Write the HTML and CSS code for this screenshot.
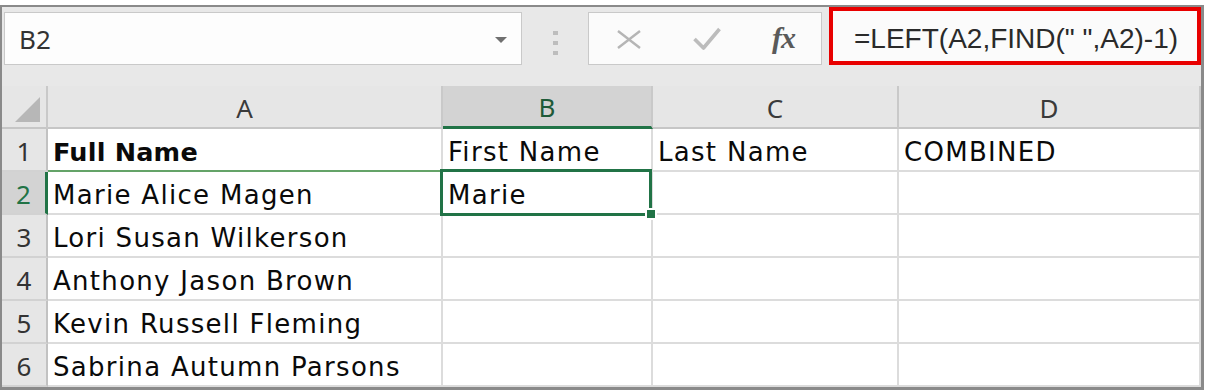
FILE: index.html
```html
<!DOCTYPE html>
<html>
<head>
<meta charset="utf-8">
<link rel="stylesheet" href="styles.css">
</head>
<body>
<div class="frame">
  <div class="toolbar">
    <div class="namebox">
      <span class="ref">B2</span>
      <span class="caret"></span>
    </div>
    <div class="grip"><i></i><i></i><i></i></div>
    <div class="fxbox">
      <svg class="icon-x" width="24" height="19" viewBox="0 0 24 19"><path d="M1 1 L23 18 M23 1 L1 18" stroke="#b5b5b5" stroke-width="2.4" fill="none"/></svg>
      <svg class="icon-check" width="28" height="24" viewBox="0 0 28 24"><path d="M1.5 12 L10.5 21 L26.5 2" stroke="#bcbcbc" stroke-width="3.6" fill="none" stroke-linejoin="round"/></svg>
      <span class="fx">fx</span>
    </div>
    <div class="formula">=LEFT(A2,FIND(" ",A2)-1)</div>
  </div>
  <div class="sheet">
    <div class="corner"><svg width="25" height="25" viewBox="0 0 25 25"><polygon points="25,0 25,25 0,25" fill="#b7b7b7"/></svg></div>
    <div class="colhead">A</div>
    <div class="colhead sel-col">B</div>
    <div class="colhead">C</div>
    <div class="colhead">D</div>

    <div class="rowhead">1</div>
    <div class="cell bold a1">Full Name</div>
    <div class="cell">First Name</div>
    <div class="cell">Last Name</div>
    <div class="cell">COMBINED</div>

    <div class="rowhead sel-row">2</div>
    <div class="cell">Marie Alice Magen</div>
    <div class="cell active">Marie<span class="selection"></span><span class="handle"></span></div>
    <div class="cell"></div>
    <div class="cell"></div>

    <div class="rowhead">3</div>
    <div class="cell">Lori Susan Wilkerson</div>
    <div class="cell"></div>
    <div class="cell"></div>
    <div class="cell"></div>

    <div class="rowhead">4</div>
    <div class="cell">Anthony Jason Brown</div>
    <div class="cell"></div>
    <div class="cell"></div>
    <div class="cell"></div>

    <div class="rowhead">5</div>
    <div class="cell">Kevin Russell Fleming</div>
    <div class="cell"></div>
    <div class="cell"></div>
    <div class="cell"></div>

    <div class="rowhead">6</div>
    <div class="cell">Sabrina Autumn Parsons</div>
    <div class="cell"></div>
    <div class="cell"></div>
    <div class="cell"></div>
  </div>
</div>
</body>
</html>
```

FILE: styles.css
```css
* { box-sizing: border-box; }

html, body {
  margin: 0;
  padding: 0;
  background: #ffffff;
}

.frame {
  margin-top: 5px;
  width: 1204px;
  border: 2px solid #8a8a8a;
  border-right-width: 3px;
  border-bottom-width: 3px;
  background: #e8e8e8;
}

/* ---------- formula bar ---------- */
.toolbar {
  height: 79px;
  display: flex;
  align-items: flex-start;
  background: #e8e8e8;
}

.namebox {
  margin-left: 2px;
  margin-top: 5px;
  width: 518px;
  height: 53px;
  background: #fdfdfd;
  border: 1px solid #c9c9c9;
  display: flex;
  align-items: center;
  justify-content: space-between;
  padding: 0 14px 0 14px;
}

.ref {
  font-family: "Noto Sans", sans-serif;
  font-size: 26px;
  color: #333333;
}

.caret {
  width: 0;
  height: 0;
  border-left: 6.5px solid transparent;
  border-right: 6.5px solid transparent;
  border-top: 6px solid #707070;
  margin-top: 2px;
}

.grip {
  margin-left: 31px;
  margin-top: 24px;
  width: 5px;
  display: flex;
  flex-direction: column;
  gap: 6px;
}

.grip i {
  display: block;
  width: 5px;
  height: 4px;
  background: #bdbdbd;
}

.fxbox {
  margin-left: 30px;
  margin-top: 5px;
  width: 234px;
  height: 53px;
  background: #fbfbfb;
  border: 1px solid #c9c9c9;
  display: flex;
  align-items: center;
  padding-left: 28px;
}

.icon-x { margin-top: 2px; }
.icon-check { margin-left: 52px; margin-top: 1px; }

.fx {
  margin-left: 51px;
  font-family: "Liberation Serif", serif;
  font-style: italic;
  font-weight: bold;
  font-size: 30px;
  color: #5a5a5a;
  letter-spacing: -1px;
  margin-top: -2px;
}

.formula {
  margin-left: 7px;
  flex: 1;
  height: 58px;
  border: 4px solid #e80000;
  background: #fbfbfb;
  display: flex;
  align-items: center;
  padding-left: 21px;
  padding-top: 5px;
  font-family: "Liberation Sans", Arial, sans-serif;
  font-size: 28px;
  color: #2a2a2a;
  white-space: nowrap;
}

/* ---------- sheet grid ---------- */
.sheet {
  display: grid;
  grid-template-columns: 46px 395px 210px 246px 1fr;
  grid-auto-rows: 43px;
  background: #ffffff;
}

.corner,
.colhead,
.rowhead {
  background: #e6e6e6;
  font-family: "Noto Sans", sans-serif;
  color: #3a3a3a;
}

.corner {
  border-right: 2px solid #c9c9c9;
  border-bottom: 2px solid #c6c6c6;
  display: flex;
  align-items: flex-end;
  justify-content: flex-end;
  padding: 0 6px 5px 0;
}

.colhead {
  border-right: 2px solid #c9c9c9;
  border-bottom: 2px solid #c6c6c6;
  display: flex;
  align-items: center;
  justify-content: center;
  font-size: 26px;
  padding-top: 2px;
}

.colhead.sel-col {
  background: #d3d3d3;
  border-bottom: 3px solid #217346;
  color: #1e5a38;
}

.rowhead {
  border-right: 2px solid #c2c2c2;
  border-bottom: 2px solid #d2d2d2;
  display: flex;
  align-items: center;
  justify-content: center;
  font-size: 26px;
  padding-top: 3px;
  color: #333333;
}

.rowhead.sel-row {
  background: #d3d3d3;
  border-right: 3px solid #217346;
  color: #217346;
}

.cell {
  position: relative;
  border-right: 2px solid #dcdcdc;
  border-bottom: 2px solid #dcdcdc;
  display: flex;
  align-items: center;
  padding: 5px 0 0 5px;
  font-family: "DejaVu Sans", sans-serif;
  font-size: 26px;
  letter-spacing: 1.3px;
  color: #0a0a0a;
  white-space: nowrap;
}

.cell.bold {
  font-weight: bold;
  font-size: 25.5px;
  letter-spacing: 0.2px;
}

.cell.a1 {
  border-bottom-color: #64a368;
}

.cell.active {
  z-index: 2;
}

/* active cell selection overlay */
.selection {
  position: absolute;
  top: -3px;
  left: -3px;
  right: -1px;
  bottom: -3px;
  border: 3px solid #217346;
}

.handle {
  position: absolute;
  right: -6px;
  bottom: -7px;
  width: 12px;
  height: 12px;
  background: #217346;
  border: 2px solid #ffffff;
}
```
